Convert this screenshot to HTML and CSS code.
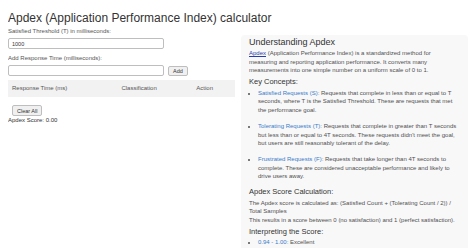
FILE: index.html
```html
<!DOCTYPE html>
<html>
    <head>
        <title>Apdex Calculator</title>
        <link rel="stylesheet" href="styles.css">
    </head>
    <body>
        <h1 class="title">Apdex (Application Performance Index) calculator</h1>
        <div class="layout">
            <div class="calculator">
                <label for="threshold">Satisfied Threshold (T) in milliseconds:</label>
                <input id="threshold" type="text" value="1000">
                <label for="responseTime">Add Response Time (milliseconds):</label>
                <div class="add-row">
                    <input id="responseTime" type="text">
                    <button id="addBtn" class="btn">Add</button>
                </div>
                <table class="results">
                    <thead>
                        <tr>
                            <th>Response Time (ms)</th>
                            <th>Classification</th>
                            <th>Action</th>
                        </tr>
                    </thead>
                    <tbody id="resultsBody"></tbody>
                </table>
                <button id="clearBtn" class="btn clear-btn">Clear All</button>
                <div class="score">Apdex Score: <span id="score">0.00</span></div>
            </div>
            <div class="info">
                <h3>Understanding Apdex</h3>
                <p><a href="#">Apdex</a> (Application Performance Index) is a standardized method for measuring and reporting application performance. It converts many measurements into one simple number on a uniform scale of 0 to 1.</p>
                <h4>Key Concepts:</h4>
                <ul class="concepts">
                    <li><span class="term">Satisfied Requests (S):</span> Requests that complete in less than or equal to T seconds, where T is the Satisfied Threshold. These are requests that met the performance goal.</li>
                    <li><span class="term">Tolerating Requests (T):</span> Requests that complete in greater than T seconds but less than or equal to 4T seconds. These requests didn't meet the goal, but users are still reasonably tolerant of the delay.</li>
                    <li><span class="term">Frustrated Requests (F):</span> Requests that take longer than 4T seconds to complete. These are considered unacceptable performance and likely to drive users away.</li>
                </ul>
                <h4>Apdex Score Calculation:</h4>
                <p>The Apdex score is calculated as: (Satisfied Count + (Tolerating Count / 2)) / Total Samples</p>
                <p>This results in a score between 0 (no satisfaction) and 1 (perfect satisfaction).</p>
                <h4>Interpreting the Score:</h4>
                <ul class="ranges">
                    <li><span class="term">0.94 - 1.00:</span> Excellent</li>
                    <li><span class="term">0.85 - 0.93:</span> Good</li>
                    <li><span class="term">0.70 - 0.84:</span> Fair</li>
                    <li><span class="term">0.50 - 0.69:</span> Poor</li>
                    <li><span class="term">0.00 - 0.49:</span> Unacceptable</li>
                </ul>
            </div>
        </div>
        <script>
            const times = [];

            function classify(ms) {
                const t = parseFloat(document.getElementById("threshold").value) || 0;
                if (ms <= t) return "Satisfied";
                if (ms <= 4 * t) return "Tolerating";
                return "Frustrated";
            }

            function render() {
                const body = document.getElementById("resultsBody");
                body.innerHTML = "";
                let s = 0, tol = 0;
                times.forEach((ms, i) => {
                    const c = classify(ms);
                    if (c === "Satisfied") s++;
                    if (c === "Tolerating") tol++;
                    const row = document.createElement("tr");
                    row.innerHTML = `<td>${ms}</td><td>${c}</td><td><button class="btn" data-i="${i}">Remove</button></td>`;
                    body.appendChild(row);
                });
                const score = times.length ? (s + tol / 2) / times.length : 0;
                document.getElementById("score").innerText = score.toFixed(2);
            }

            document.getElementById("addBtn").addEventListener("click", () => {
                const input = document.getElementById("responseTime");
                const ms = parseFloat(input.value);
                if (!isNaN(ms)) {
                    times.push(ms);
                    input.value = "";
                    render();
                }
            });
            document.getElementById("resultsBody").addEventListener("click", e => {
                if (e.target.dataset.i !== undefined) {
                    times.splice(parseInt(e.target.dataset.i), 1);
                    render();
                }
            });
            document.getElementById("clearBtn").addEventListener("click", () => {
                times.length = 0;
                render();
            });
            document.getElementById("threshold").addEventListener("input", render);
        </script>
    </body>
</html>
```

FILE: styles.css
```css
::-webkit-scrollbar {
    width: 8px;
}
::-webkit-scrollbar-track {
    background: rgb(241, 241, 241);
}
::-webkit-scrollbar-thumb {
    background: rgb(193, 193, 193);
    border: 1.5px solid rgb(241, 241, 241);
}
body {
    margin: 8px 6px 8px 8px;
    font-family: "Liberation Sans", Arial, sans-serif;
    font-size: 6px;
    color: rgb(51, 51, 51);
}
.title {
    font-size: 12px;
    font-weight: normal;
    line-height: 14px;
    margin: 3px 0;
    white-space: nowrap;
}
.layout {
    display: grid;
    grid-template-columns: 1fr 1fr;
    column-gap: 6px;
    align-items: start;
}
label {
    display: block;
    line-height: 7px;
    margin-bottom: 3px;
    color: rgb(85, 85, 85);
}
input[type="text"] {
    display: block;
    box-sizing: border-box;
    width: 156px;
    height: 11px;
    padding: 0 3px;
    font-family: inherit;
    font-size: 5.5px;
    color: rgb(51, 51, 51);
    border: 1px solid rgb(190, 190, 190);
    border-radius: 2px;
    margin: 0 0 6px;
}
.add-row {
    display: flex;
    align-items: center;
    column-gap: 4px;
    margin-bottom: 4px;
}
.add-row input[type="text"] {
    margin: 0;
}
.btn {
    box-sizing: border-box;
    height: 10px;
    padding: 0 4px;
    font-family: inherit;
    font-size: 5.5px;
    color: rgb(51, 51, 51);
    background-color: rgb(240, 240, 240);
    border: 1px solid rgb(190, 190, 190);
    border-radius: 2px;
}
.results {
    width: 100%;
    border-collapse: collapse;
    font-size: 6px;
}
.results th {
    text-align: left;
    font-weight: normal;
    color: rgb(85, 85, 85);
    background-color: rgb(242, 242, 242);
    padding: 5px 4px;
    line-height: 7px;
}
.results td {
    padding: 3px 4px;
    border-bottom: 1px solid rgb(221, 221, 221);
}
.clear-btn {
    display: block;
    height: 11px;
    margin: 8px 0 1px 4px;
}
.score {
    line-height: 7px;
}
.info {
    margin-top: 7px;
    padding: 2px 8px 8px;
    background-color: rgb(248, 248, 249);
    border-radius: 4px;
    color: rgb(80, 80, 80);
    font-size: 6px;
    line-height: 8.7px;
}
.info h3 {
    font-size: 9px;
    font-weight: normal;
    line-height: 10px;
    margin: 0 0 2px;
    color: rgb(51, 51, 51);
}
.info h4 {
    font-size: 7.5px;
    font-weight: normal;
    line-height: 8.6px;
    margin: 3px 0 2px;
    color: rgb(51, 51, 51);
}
.info p {
    margin: 0;
}
.info a {
    color: rgb(40, 60, 170);
}
.info ul {
    margin: 0;
    padding-left: 9px;
}
.info li {
    margin-bottom: 7px;
}
.term {
    color: rgb(58, 123, 200);
}
```
